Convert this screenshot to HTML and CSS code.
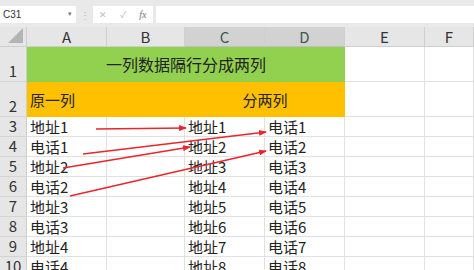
FILE: index.html
```html
<!DOCTYPE html>
<html lang="zh-CN">
<head>
    <meta charset="UTF-8">
    <meta name="viewport" content="width=device-width, initial-scale=1.0">
    <title>一列数据隔行分成两列</title>
    <link rel="stylesheet" href="styles.css">
</head>
<body>

    <div class="app">
        <!-- Formula bar -->
        <div class="formula-bar">
            <div class="name-box"><span>C31</span><span class="caret">▾</span></div>
            <div class="grip">⋮</div>
            <div class="fx-box">
                <span>✕</span>
                <span>✓</span>
                <span class="fx">fx</span>
            </div>
            <div class="formula-input"></div>
        </div>

        <!-- Sheet grid -->
        <div class="sheet">
            <div class="corner"><span class="corner-mark"></span></div>
            <div class="col-head">A</div>
            <div class="col-head">B</div>
            <div class="col-head selected">C</div>
            <div class="col-head selected">D</div>
            <div class="col-head">E</div>
            <div class="col-head">F</div>

            <div class="row-head">1</div>
            <div class="cell title">一列数据隔行分成两列</div>
            <div class="cell"></div>
            <div class="cell"></div>

            <div class="row-head">2</div>
            <div class="cell orange">原一列</div>
            <div class="cell orange"></div>
            <div class="cell orange span2">分两列</div>
            <div class="cell"></div>
            <div class="cell"></div>

            <div class="row-head">3</div>
            <div class="cell">地址1</div><div class="cell"></div><div class="cell">地址1</div><div class="cell">电话1</div><div class="cell"></div><div class="cell"></div>
            <div class="row-head">4</div>
            <div class="cell">电话1</div><div class="cell"></div><div class="cell">地址2</div><div class="cell">电话2</div><div class="cell"></div><div class="cell"></div>
            <div class="row-head">5</div>
            <div class="cell">地址2</div><div class="cell"></div><div class="cell">地址3</div><div class="cell">电话3</div><div class="cell"></div><div class="cell"></div>
            <div class="row-head">6</div>
            <div class="cell">电话2</div><div class="cell"></div><div class="cell">地址4</div><div class="cell">电话4</div><div class="cell"></div><div class="cell"></div>
            <div class="row-head">7</div>
            <div class="cell">地址3</div><div class="cell"></div><div class="cell">地址5</div><div class="cell">电话5</div><div class="cell"></div><div class="cell"></div>
            <div class="row-head">8</div>
            <div class="cell">电话3</div><div class="cell"></div><div class="cell">地址6</div><div class="cell">电话6</div><div class="cell"></div><div class="cell"></div>
            <div class="row-head">9</div>
            <div class="cell">地址4</div><div class="cell"></div><div class="cell">地址7</div><div class="cell">电话7</div><div class="cell"></div><div class="cell"></div>
            <div class="row-head">10</div>
            <div class="cell">电话4</div><div class="cell"></div><div class="cell">地址8</div><div class="cell">电话8</div><div class="cell"></div><div class="cell"></div>
        </div>

        <!-- Red arrows drawn over the sheet -->
        <svg class="arrows" width="474" height="270" viewBox="0 0 474 270">
            <defs>
                <marker id="head" markerWidth="8" markerHeight="6" refX="7" refY="3" orient="auto" markerUnits="userSpaceOnUse">
                    <path d="M0,0 L8,3 L0,6 Z" fill="#e8262d"/>
                </marker>
            </defs>
            <line x1="96" y1="129" x2="186" y2="128" marker-end="url(#head)"/>
            <line x1="83" y1="154" x2="266" y2="132" marker-end="url(#head)"/>
            <line x1="63" y1="168" x2="190" y2="147" marker-end="url(#head)"/>
            <line x1="70" y1="196" x2="266" y2="151" marker-end="url(#head)"/>
        </svg>
    </div>

</body>
</html>
```

FILE: styles.css
```css
body {
    margin: 0;
    padding: 0;
    font-family: "Noto Sans CJK SC", "Noto Sans", sans-serif;
    color: #222;
    background-color: #fff;
}
.app {
    position: relative;
    width: 474px;
    height: 270px;
    overflow: hidden;
}

/* Formula bar */
.formula-bar {
    display: flex;
    align-items: center;
    height: 27px;
    padding-top: 1px;
    background-color: #e9e9e9;
    box-sizing: border-box;
}
.name-box {
    display: flex;
    justify-content: space-between;
    align-items: center;
    width: 76px;
    height: 17px;
    padding: 0 4px 0 3px;
    box-sizing: border-box;
    background-color: #fff;
    font-size: 10px;
    color: #333;
    font-family: "Liberation Sans", sans-serif;
}
.caret {
    font-size: 7px;
    color: #777;
}
.grip {
    width: 17px;
    text-align: center;
    font-size: 10px;
    color: #b8b8b8;
}
.fx-box {
    display: flex;
    align-items: center;
    justify-content: space-around;
    width: 60px;
    height: 17px;
    background-color: #fff;
    font-size: 9px;
    color: #bdbdbd;
}
.fx-box .fx {
    font-family: "Liberation Serif", serif;
    font-style: italic;
    color: #777;
    font-size: 10px;
}
.formula-input {
    flex: 1;
    height: 17px;
    margin-left: 3px;
    background-color: #fff;
}

/* Sheet */
.sheet {
    display: grid;
    grid-template-columns: 27px 80px 78px 80px 80px 80px 49px;
    grid-template-rows: 20px 35px 35px repeat(8, 20px);
}
.corner {
    position: relative;
    background-color: #e6e6e6;
    border-right: 1px solid #cfcfcf;
    border-bottom: 1px solid #cfcfcf;
    box-sizing: border-box;
}
.corner-mark {
    position: absolute;
    right: 3px;
    bottom: 3px;
    width: 0;
    height: 0;
    border-left: 15px solid transparent;
    border-bottom: 15px solid #b4b4b4;
}
.col-head {
    display: flex;
    justify-content: center;
    align-items: center;
    background-color: #e6e6e6;
    border-right: 1px solid #cfcfcf;
    border-bottom: 1px solid #cfcfcf;
    box-sizing: border-box;
    font-size: 15px;
    color: #333;
}
.col-head.selected {
    background-color: #d2d2d2;
    color: #3f5a4a;
    border-bottom-color: #c0c0c0;
}
.row-head {
    display: flex;
    justify-content: center;
    align-items: flex-end;
    background-color: #e6e6e6;
    border-right: 1px solid #cfcfcf;
    border-bottom: 1px solid #d4d4d4;
    box-sizing: border-box;
    font-size: 15px;
    line-height: 20px;
    color: #333;
}
.cell {
    display: flex;
    align-items: flex-end;
    padding-left: 3px;
    border-right: 1px solid #e1e1e1;
    border-bottom: 1px solid #e1e1e1;
    box-sizing: border-box;
    font-size: 15px;
    line-height: 19px;
    white-space: nowrap;
}
.cell.title {
    grid-column: span 4;
    justify-content: center;
    align-items: center;
    padding-left: 0;
    background-color: #92d050;
    border: none;
    font-size: 16px;
}
.cell.orange {
    background-color: #ffc000;
    border: none;
    align-items: center;
}
.cell.span2 {
    grid-column: span 2;
    justify-content: center;
    padding-left: 0;
}

/* Arrows overlay */
.arrows {
    position: absolute;
    top: 0;
    left: 0;
    pointer-events: none;
}
.arrows line {
    stroke: #e8262d;
    stroke-width: 1.6;
}
```
